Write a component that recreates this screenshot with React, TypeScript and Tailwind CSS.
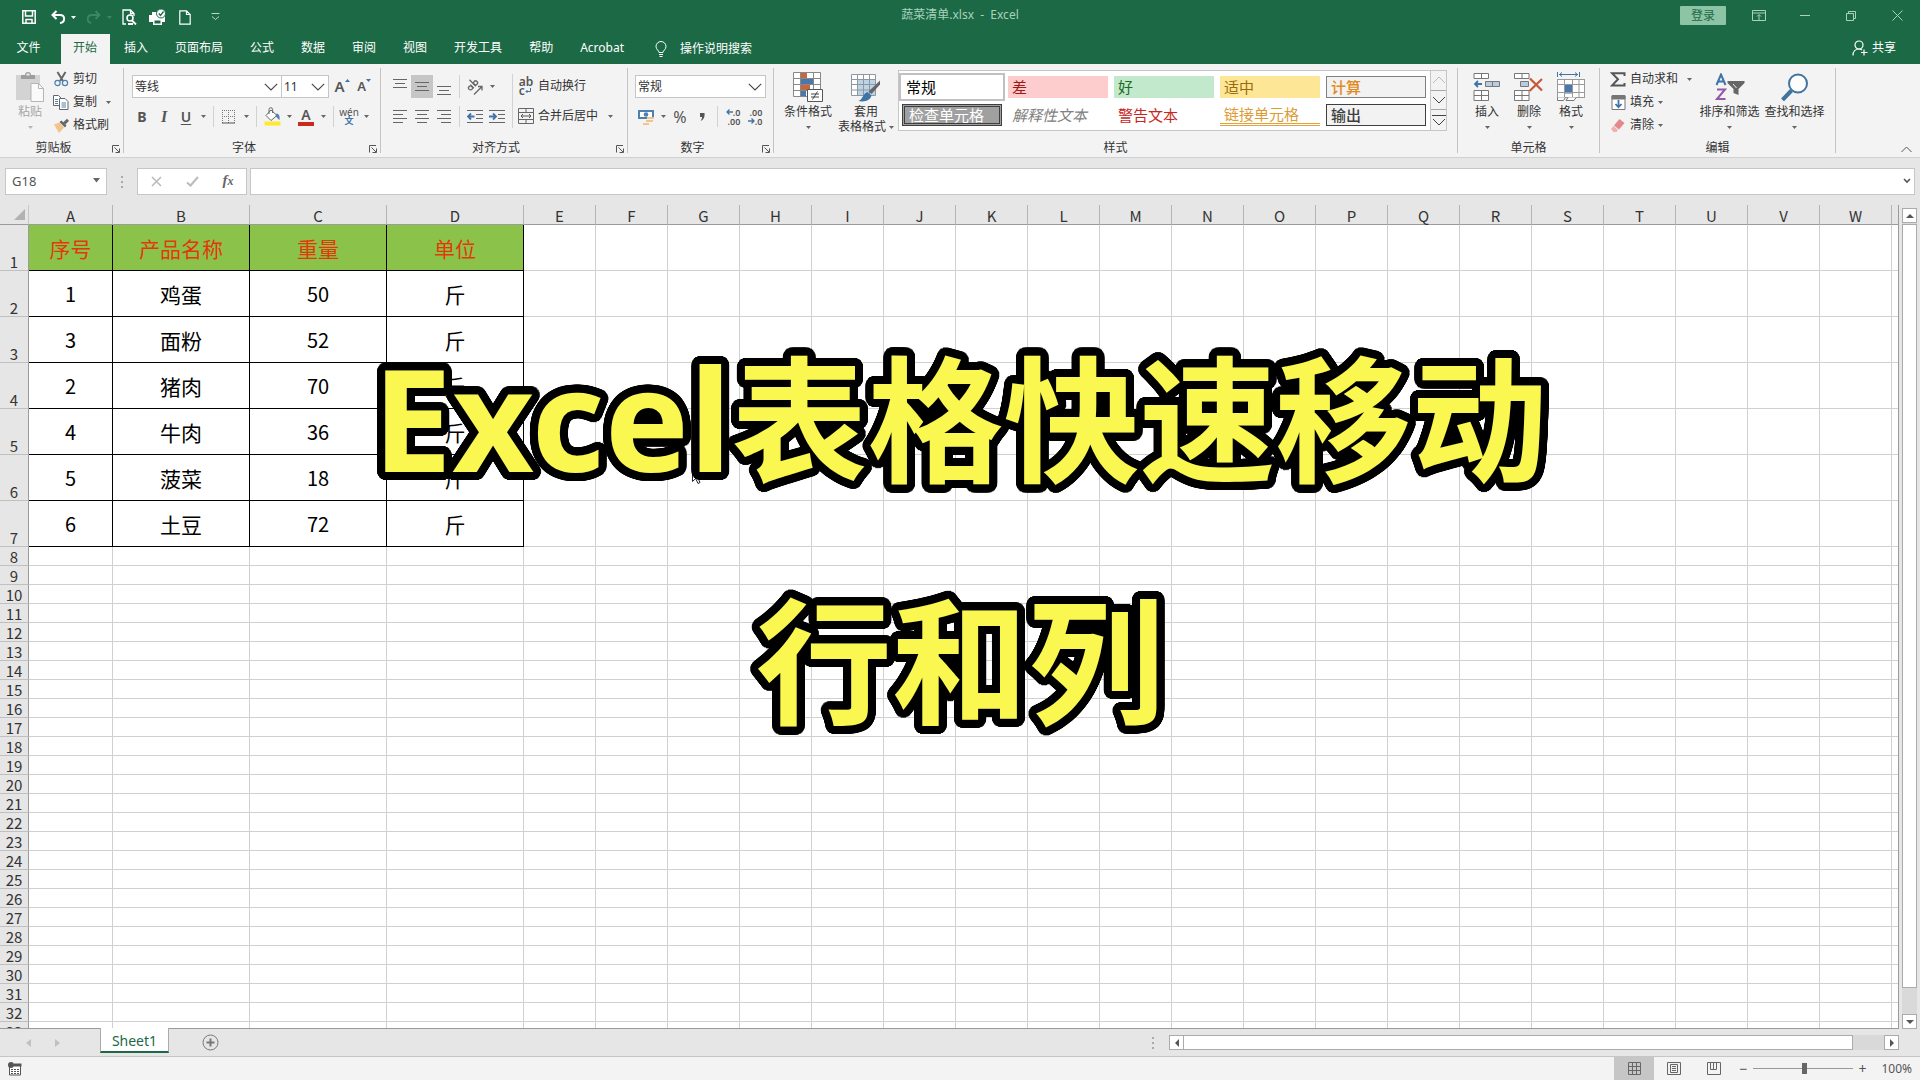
import type { ReactNode } from "react";

/* ---------- small shared pieces ---------- */

function Arrow({ className = "text-[#666]" }: { className?: string }) {
  return (
    <svg width="5" height="3" viewBox="0 0 5 3" className={className} aria-hidden="true">
      <path d="M0 0h5L2.500 3z" fill="currentColor" />
    </svg>
  );
}

function ArrowButton({ label, className = "" }: { label: string; className?: string }) {
  return (
    <button aria-label={label} className={`flex h-full w-3 shrink-0 items-center justify-center ${className}`}>
      <Arrow />
    </button>
  );
}

function IconButton({ label, active = false, children }: { label: string; active?: boolean; children: ReactNode }) {
  return (
    <button
      aria-label={label}
      className={`flex h-full w-[22px] shrink-0 items-center justify-center text-[#555] ${active ? "bg-[#c6c6c6]" : ""}`}
    >
      {children}
    </button>
  );
}

function Sep() {
  return <span className="mx-1 h-full w-px shrink-0 bg-[#d2d2d2]" />;
}

function Launcher({ label }: { label: string }) {
  return (
    <button aria-label={label} className="absolute right-[3px] bottom-0">
      <svg width="8" height="8" viewBox="0 0 8 8" fill="none" stroke="#555">
        <path d="M.5 7.500V.5H7M2.500 2.500l4.500 4.500M7.500 3.500v4H3.500" />
      </svg>
    </button>
  );
}

function Group({
  title,
  width,
  launcher = false,
  children,
}: {
  title: string;
  width: string;
  launcher?: boolean;
  children: ReactNode;
}) {
  return (
    <section aria-label={title} className={`relative flex shrink-0 flex-col border-r border-[#c4c4c4] ${width}`}>
      <div className="flex h-[75px]">{children}</div>
      <div className={`flex h-[10px] items-center justify-center leading-[16px] text-[#333] ${launcher ? "pr-4" : ""}`}>{title}</div>
      {launcher && <Launcher label={`${title}设置`} />}
    </section>
  );
}

function BigButton({
  lines,
  width,
  disabled = false,
  children,
}: {
  lines: string[];
  width: string;
  disabled?: boolean;
  children: ReactNode;
}) {
  return (
    <button disabled={disabled} className={`flex shrink-0 flex-col items-center pt-1 ${width} ${disabled ? "text-[#a6a6a6]" : ""}`}>
      <span className="flex h-[30px] items-center">{children}</span>
      <span className="mt-0.5 h-4 leading-4 whitespace-nowrap">{lines[0]}</span>
      <span className="flex h-[14px] items-center gap-[3px] leading-4 whitespace-nowrap">
        {lines[1]}
        <Arrow className={disabled ? "text-[#b5b5b5]" : "text-[#666]"} />
      </span>
    </button>
  );
}

function SmallButton({ icon, text, arrow = "" }: { icon: ReactNode; text: string; arrow?: string }) {
  return (
    <button className="flex h-[22px] items-center whitespace-nowrap">
      <span className="mr-[3px] flex w-[18px] justify-center">{icon}</span>
      {text}
      {arrow && (
        <span className={arrow}>
          <Arrow />
        </span>
      )}
    </button>
  );
}

function Combo({ label, value, options, width }: { label: string; value: string; options: string[]; width: string }) {
  return (
    <span className={`relative flex h-full ${width}`}>
      <select
        aria-label={label}
        defaultValue={value}
        className="h-full w-full appearance-none border border-[#c6c6c6] bg-white pl-[2px] text-[12px] text-[#333] outline-none"
      >
        {options.map((o) => (
          <option key={o}>{o}</option>
        ))}
      </select>
      <svg
        className="pointer-events-none absolute top-[8px] right-1"
        width="14"
        height="8"
        viewBox="0 0 14 8"
        fill="none"
        stroke="#444"
        strokeWidth="1.100"
      >
        <path d="M.8.8L7 7L13.200.8" />
      </svg>
    </span>
  );
}

/* Horizontal-rule icons; each entry is [x, width]. */
function Lines({ rows, y = 1 }: { rows: number[][]; y?: number }) {
  return (
    <svg width="16" height="16" viewBox="0 0 16 16" stroke="#666" strokeWidth="1">
      {rows.map(([x, w], i) => (
        <path key={i} d={`M${x} ${y + i * 4 + 0.5}h${w}`} />
      ))}
    </svg>
  );
}

/* ---------- ribbon icons ---------- */

const ScissorsIcon = (
  <svg width="15" height="16" viewBox="0 0 15 16" fill="none">
    <path d="M3.500 1l5.500 9M11.500 1L6 10" stroke="#666" strokeWidth="2" />
    <circle cx="3.500" cy="12" r="2.600" stroke="#4f81b0" strokeWidth="1.200" />
    <circle cx="11" cy="12" r="2.600" stroke="#4f81b0" strokeWidth="1.200" />
  </svg>
);

const CopyIcon = (
  <svg width="16" height="15" viewBox="0 0 16 15" fill="#fff" stroke="#666">
    <path d="M.5.5h5l3 3v7h-8z" />
    <path d="M2 4.500h3M2 6.500h3M2 8.500h3" stroke="#4f81b0" />
    <path d="M6.500 3.500h5.500l3 3v8h-8.500z" />
    <path d="M8.500 8h4.500M8.500 10h4.500M8.500 12h4.500" stroke="#4f81b0" />
  </svg>
);

const PainterIcon = (
  <svg width="17" height="15" viewBox="0 0 17 15">
    <path d="M1 6.500l5.500-2L11 9.500l-5 5.500z" fill="#f0c48c" />
    <path d="M6.500 4l2-1.500 5 5L12 9.500z" fill="#666" />
    <path d="M10 4.500L14 .8 16 2.800 12.500 6.500z" fill="#666" />
  </svg>
);

const PasteIcon = (
  <svg width="28" height="30" viewBox="0 0 28 30">
    <path d="M0 3h24v25H0z" fill="#d3d3d3" />
    <path d="M5 3h4a3 3 0 0 1 6 0h4v4H5z" fill="#9d9d9d" />
    <path d="M10.500 3.500h3v-2h-3z" fill="#eee" />
    <path d="M15 11.500h7.500l5 5V29.500H15z" fill="#fafafa" stroke="#b5b5b5" />
    <path d="M22.500 11.500v5h5" fill="none" stroke="#b5b5b5" />
  </svg>
);

const BordersIcon = (
  <svg width="14" height="14" viewBox="0 0 14 14" fill="none" stroke="#777">
    <path d="M.5 0v13M6.500 0v13M12.500 0v13M0 .5h13M0 6.500h13" strokeDasharray="1 1" />
    <path d="M0 13h13" stroke="#555" />
  </svg>
);

const FillIcon = (
  <svg width="17" height="19" viewBox="0 0 17 19">
    <path d="M7 3l6 5.500-6 5-5-5z" fill="#fff" stroke="#666" />
    <path d="M5 7V2.500a1.800 1.800 0 0 1 3.600 0V6" fill="none" stroke="#666" />
    <path d="M12.500 6.500c3 .5 3.500 3.500 3 6.500-1.500-1-2.500-2.500-4-4z" fill="#4f81b0" />
    <path d="M.5 14.500h16V18.500H.5z" fill="#ffe92e" />
  </svg>
);

const MergeIcon = (
  <svg width="16" height="16" viewBox="0 0 16 16" fill="none" stroke="#666">
    <path d="M.5.5h15v15H.5zM.5 4.500h15M.5 11.500h15M8 .5v4M8 11.500v4" />
    <path d="M3 8h10M5 6L3 8l2 2M11 6l2 2-2 2" stroke="#555" />
  </svg>
);

const MoneyIcon = (
  <svg width="17" height="16" viewBox="0 0 17 16">
    <path d="M1 2h14v7H1z" fill="#fff" stroke="#4f81b0" strokeWidth="2" />
    <circle cx="8" cy="5.500" r="2.300" fill="#4f81b0" />
    <path d="M9 8h7v2H9zM8 11h7v2H8zM5 14h6v2H5z" fill="#f0c48c" />
  </svg>
);

const OrientationIcon = (
  <svg width="18" height="18" viewBox="0 0 18 18" fill="none" stroke="#666" strokeWidth="1.300">
    <path d="M8 16.500L16 8.500M16 12.500v-4h-4" />
    <g transform="translate(5 13) rotate(-45)">
      <circle cx="1.800" cy="-2.500" r="2" />
      <path d="M4 -5v5M6.800 -9v9" />
      <circle cx="9" cy="-2.500" r="2" />
    </g>
  </svg>
);

function DecimalIcon({ increase }: { increase: boolean }) {
  return (
    <span className="flex flex-col text-[9px] leading-[9px] font-semibold text-[#555]">
      <span className={increase ? "flex items-center justify-end" : "text-right"}>
        {increase && <Direction left />}
        {increase ? ".0" : ".00"}
      </span>
      <span className={increase ? "text-right" : "flex items-center justify-end"}>
        {!increase && <Direction />}
        {increase ? ".00" : ".0"}
      </span>
    </span>
  );
}

function Direction({ left = false }: { left?: boolean }) {
  return (
    <svg width="7" height="6" viewBox="0 0 7 6" fill="none" stroke="#3f74a8" strokeWidth="1.300">
      <path d={left ? "M7 3H1M3.500.5L1 3l2.500 2.500" : "M0 3h6M3.500.5L6 3 3.500 5.500"} />
    </svg>
  );
}

function IndentIcon({ left }: { left: boolean }) {
  return (
    <svg width="17" height="14" viewBox="0 0 17 14" fill="none" stroke="#666">
      <path d="M0 .5h16M9 4.500h7M9 8.500h7M0 12.500h16" />
      <path d={left ? "M7.500 6.500H1M4 3.500l-3 3 3 3" : "M0 6.500h6.500M4 3.500l3 3-3 3"} stroke="#3f74a8" strokeWidth="1.800" />
    </svg>
  );
}

const ConditionalIcon = (
  <svg width="30" height="30" viewBox="0 0 30 30">
    <path d="M.5.5h27v24H.5z" fill="#fff" />
    <path d="M8 1h6v6H8zM8 13h9v5H8z" fill="#c8673e" />
    <path d="M8 7h12v5H8zM8 19h5v5H8z" fill="#4a78ad" />
    <path d="M.5.5h27v24H.5zM.5 6.500h27M.5 12.500h27M.5 18.500h27M7.500.5v24M20.500.5v24" fill="none" stroke="#888" />
    <path d="M14.500 17.500h15v12h-15z" fill="#fff" stroke="#555" />
    <path d="M18 22h8M18 25h8M24.500 19.500l-5 8" stroke="#444" />
  </svg>
);

const TableFormatIcon = (
  <svg width="30" height="30" viewBox="0 0 30 30">
    <path d="M.5 2.500h24v21H.5z" fill="#fff" />
    <path d="M6 7.500h18.500v16H6z" fill="#bcd3e6" />
    <path d="M.5 2.500h24v21H.5zM.5 7.500h24M.5 12.500h24M.5 18h24M6.500 2.500v21M12.500 2.500v21M18.500 2.500v21" fill="none" stroke="#8d98a3" />
    <path d="M29 8.500v4L20.500 22l-3-2.500z" fill="#666" />
    <path d="M16.500 20l4 3.500c-1 4.500-6 7-13.500 5.500 5-1 4.500-7.500 9.500-9z" fill="#3f74a8" />
  </svg>
);

const InsertIcon = (
  <svg width="28" height="28" viewBox="0 0 28 28" fill="#fff" stroke="#777">
    <path d="M1 .5h14.500v5H1zM8.500.5v5M1 17.500h14.500v10H1zM1 22.500h14.500M8.500 17.500v10" />
    <path d="M12.500 8.500h14v5h-14zM19.500 8.500v5" fill="#b9cde0" />
    <path d="M9 11H2M5 8l-3 3 3 3" fill="none" stroke="#3f74a8" strokeWidth="1.800" />
  </svg>
);

const DeleteIcon = (
  <svg width="30" height="28" viewBox="0 0 30 28" fill="#fff" stroke="#777">
    <path d="M.5.5H15v5H.5zM8 .5v5M.5 17.500H15v10H.5zM.5 22.500H15M8 17.500v10" />
    <path d="M6.500 8.500h8v5h-8z" fill="#b9cde0" />
    <path d="M16 5.500l12 12M28 6L15.500 18" fill="none" stroke="#c8573a" strokeWidth="2.200" />
  </svg>
);

const FormatIcon = (
  <svg width="28" height="30" viewBox="0 0 28 30" fill="none" stroke="#777">
    <path d="M.5 0v5M22.500 0v5M2 2.500h19M5 .5l-2.500 2L5 4.500M18 .5l2.500 2-2.500 2" stroke="#3f74a8" />
    <path d="M.5 7.500h27v18H.5z" fill="#fff" />
    <path d="M7.500 12.500h8v9h-8z" fill="#4a78ad" stroke="none" />
    <path d="M.5 7.500h27v18H.5zM.5 12.500h27M.5 20.500h27M7.500 7.500v18M15.500 7.500v18M22 7.500v18" stroke="#999" />
    <path d="M.5 25.500v3h6l2-3M11 25.500l-2 3h8l2-3" fill="#fff" />
  </svg>
);

const SortIcon = (
  <svg width="30" height="28" viewBox="0 0 30 28" fill="none">
    <path d="M1.500 12L6 1.500 10.500 12M3 8.500h6" stroke="#3f74a8" strokeWidth="2" />
    <path d="M2 16.500h8L2 26h8.500" stroke="#9359a8" strokeWidth="2" />
    <path d="M12.500 8h17v2l-6 6v6l-5-2v-4l-6-6z" fill="#666" />
    <path d="M18 11l3.500 4" stroke="#eee" />
  </svg>
);

const FindIcon = (
  <svg width="28" height="28" viewBox="0 0 28 28" fill="none" stroke="#41739f">
    <circle cx="17" cy="10.500" r="9" strokeWidth="2" fill="#fdfdfd" />
    <path d="M10.500 17.500L1.500 27" strokeWidth="4" />
  </svg>
);

const SigmaIcon = (
  <svg width="16" height="15" viewBox="0 0 16 15" fill="none" stroke="#555" strokeWidth="2">
    <path d="M14.500 4V1.200H2L8 7.300 2 13.500h12.500V11" />
  </svg>
);

const FillDownIcon = (
  <svg width="15" height="15" viewBox="0 0 15 15" fill="#fff" stroke="#777">
    <path d="M1 .5h13v14H1z" />
    <path d="M1 1h13v3H1z" fill="#777" />
    <path d="M7.500 5v7M4.500 9l3 3.200 3-3.200" fill="none" stroke="#3f74a8" strokeWidth="1.800" />
  </svg>
);

const EraserIcon = (
  <svg width="14" height="13" viewBox="0 0 14 13">
    <path d="M8.500 0L13.500 4 8 10.500 3 6.500z" fill="#e5888a" />
    <path d="M2.500 7l4.500 4-1.500 2h-3L0 10z" fill="#efb0b0" />
  </svg>
);

/* ---------- title bar and tabs ---------- */

function TitleBar() {
  const winBtn = "flex h-full w-[46px] items-center justify-center";
  return (
    <header className="grid h-[34px] grid-cols-[1fr_auto_1fr] items-center text-white">
      <div className="flex h-full items-center pl-[15px]">
        <button aria-label="保存" className="flex w-7 justify-center">
          <svg width="14" height="14" viewBox="0 0 14 14" fill="none" stroke="#fff" strokeWidth="1.500">
            <path d="M.8.8h12.400v12.400H.8zM3.500 1v5h7V1M4 13V9.500h6V13" />
          </svg>
        </button>
        <button aria-label="撤消" className="flex w-[26px] justify-center pl-1">
          <svg width="15" height="14" viewBox="0 0 15 14" fill="none" stroke="#fff" strokeWidth="2">
            <path d="M5.500 1L1.500 5l4 4M2 5h7c5.500 0 5.500 7.500 0 8" />
          </svg>
        </button>
        <button aria-label="撤消列表" className="flex w-2 justify-center">
          <Arrow className="text-white" />
        </button>
        <button aria-label="恢复" className="flex w-7 justify-center pl-1">
          <svg width="15" height="14" viewBox="0 0 15 14" fill="none" stroke="#408565" strokeWidth="1.800">
            <path d="M9.500 1l4 4-4 4M13 5H6C.5 5 .5 12 5 13" />
          </svg>
        </button>
        <button aria-label="恢复列表" className="mr-0.5 flex w-2 justify-center">
          <Arrow className="text-[#408565]" />
        </button>
        <button aria-label="打印预览" className="flex w-7 justify-center">
          <svg width="15" height="16" viewBox="0 0 15 16" fill="none" stroke="#fff" strokeWidth="1.300">
            <path d="M4 15H1V1h7.500l3.500 3.500V7M8.500 1v3.500H12" />
            <circle cx="8" cy="9" r="3" strokeWidth="1.600" />
            <path d="M10 11.500l4 4M6 15h5" strokeWidth="1.800" />
          </svg>
        </button>
        <button aria-label="快速打印" className="flex w-7 justify-center">
          <svg width="17" height="16" viewBox="0 0 17 16">
            <path d="M0 6h3V3h5v4h8v6h-3v3H4v-3H0z" fill="#fff" />
            <path d="M5.500 11.500h6v3h-6z" fill="#1c6946" />
            <circle cx="12" cy="4.500" r="4.500" fill="#fff" stroke="#1c6946" />
            <path d="M9.800 4.500l1.700 2 3-4" fill="none" stroke="#1c6946" strokeWidth="1.300" />
          </svg>
        </button>
        <button aria-label="新建" className="flex w-7 justify-center">
          <svg width="12" height="15" viewBox="0 0 12 15" fill="none" stroke="#fff" strokeWidth="1.200">
            <path d="M.8.8h6.700l3.700 3.700v9.700H.8zM7.500.8v3.700h3.700" />
          </svg>
        </button>
        <button aria-label="自定义快速访问工具栏" className="flex w-8 justify-center">
          <svg width="9" height="8" viewBox="0 0 9 8" fill="none" stroke="#b9d8c8">
            <path d="M.5.5h8M1 3.500l3.500 3 3.500-3" />
          </svg>
        </button>
      </div>
      <h1 className="pb-1 whitespace-pre text-[#a8d2bc]">蔬菜清单.xlsx  -  Excel</h1>
      <div className="flex h-[31px] items-center justify-end self-start text-[#a8d2bc]">
        <button className="mr-2.5 h-[19px] w-[46px] rounded-[1px] bg-[#8cc4a5] leading-[18px] text-[#1c6946]">登录</button>
        <button aria-label="功能区显示选项" className={winBtn}>
          <svg width="14" height="11" viewBox="0 0 14 11" fill="none" stroke="currentColor">
            <path d="M.5.5h13v10H.5zM.5 3h13M7 10V5M5 6.500l2-2 2 2" />
          </svg>
        </button>
        <button aria-label="最小化" className={winBtn}>
          <svg width="10" height="1" viewBox="0 0 10 1">
            <path d="M0 .5h10" stroke="currentColor" />
          </svg>
        </button>
        <button aria-label="还原" className={winBtn}>
          <svg width="10" height="10" viewBox="0 0 10 10" fill="none" stroke="currentColor">
            <path d="M.5 2.500h7v7h-7zM2.500 2.500v-2h7v7h-2" />
          </svg>
        </button>
        <button aria-label="关闭" className={winBtn}>
          <svg width="11" height="11" viewBox="0 0 11 11" fill="none" stroke="currentColor">
            <path d="M.5.5l10 10M10.500.5l-10 10" />
          </svg>
        </button>
      </div>
    </header>
  );
}

const TABS = ["开始", "插入", "页面布局", "公式", "数据", "审阅", "视图", "开发工具", "帮助", "Acrobat"];

function Tabs() {
  return (
    <nav className="flex h-[30px] items-stretch text-white">
      <button className="w-[61px] pr-1 pb-0.5">文件</button>
      <div className="flex gap-px">
        {TABS.map((t, i) => (
          <button key={t} className={`px-[13px] pb-0.5 whitespace-nowrap ${i === 0 ? "bg-[#f3f3f3] pl-3 text-[#1c6946]" : ""}`}>
            {t}
          </button>
        ))}
      </div>
      <button className="flex items-center gap-[13px] pl-[18px]">
        <svg width="12" height="16" viewBox="0 0 12 16" fill="none" stroke="#fff">
          <path d="M4 11.500c0-2-3-3-3-6a5 5 0 0 1 10 0c0 3-3 4-3 6zM4 13.500h4M4.500 15.500h3" />
        </svg>
        操作说明搜索
      </button>
      <button className="ml-auto flex items-center gap-1 pr-6 pb-0.5">
        <svg width="16" height="16" viewBox="0 0 16 16" fill="none" stroke="#fff" strokeWidth="1.200">
          <circle cx="7" cy="5" r="4" />
          <path d="M1 15.500c0-4 2.500-6.500 6-6.500 1 0 2 .3 3 1M12 9.500v6M9 12.500h6.500" />
        </svg>
        共享
      </button>
    </nav>
  );
}

/* ---------- ribbon ---------- */

const STYLES: [string, string][] = [
  ["常规", "bg-white text-black outline-2 outline-offset-1 outline-[#c3c0c3]"],
  ["差", "bg-[#fdcccc] text-[#a01818]"],
  ["好", "bg-[#c3e9cd] text-[#1c6b20]"],
  ["适中", "bg-[#fde695] text-[#9a6a0c]"],
  ["计算", "border border-[#7f7f7f] bg-[#f2f2f2] font-medium text-[#e38a1c]"],
  ["检查单元格", "border-3 border-double border-[#3f3f3f] bg-[#a0a0a0] text-white"],
  ["解释性文本", "text-[#808080] italic"],
  ["警告文本", "text-[#c8261c]"],
  ["链接单元格", "border-b-3 border-double border-[#e2a33a] text-[#dc9b33]"],
  ["输出", "border border-[#3f3f3f] bg-[#f2f2f2] font-medium text-[#3f3f3f]"],
];

function Chevron({ up = false, color = "#444" }: { up?: boolean; color?: string }) {
  return (
    <svg width="14" height="8" viewBox="0 0 14 8" fill="none" stroke={color}>
      <path d={up ? "M1 7l6-6 6 6" : "M1 1l6 6 6-6"} />
    </svg>
  );
}

function Ribbon() {
  const row = "flex h-[23px] items-stretch";
  return (
    <div className="flex border-b border-[#d0d0d0] bg-[#f3f3f3] pt-1 pb-1 text-[#333]">
      <Group title="剪贴板" width="w-[124px]" launcher>
        <BigButton lines={["粘贴", ""]} width="ml-2 w-[44px]" disabled>
          {PasteIcon}
        </BigButton>
        <div className="flex flex-col gap-px">
          <SmallButton icon={ScissorsIcon} text="剪切" />
          <SmallButton icon={CopyIcon} text="复制" arrow="ml-[9px]" />
          <SmallButton icon={PainterIcon} text="格式刷" />
        </div>
      </Group>

      <Group title="字体" width="w-[257px]" launcher>
        <div className="flex flex-col gap-2 pt-[7px] pl-[7px]">
          <div className={`${row} pl-px`}>
            <Combo label="字体" value="等线" options={["等线", "宋体"]} width="w-[150px]" />
            <Combo label="字号" value="11" options={["11", "12", "14"]} width="-ml-px w-[48px]" />
            <button aria-label="增大字号" className="ml-0.5 flex w-[22px] items-center justify-center text-[15px] font-semibold text-[#555]">
              A
              <svg width="5" height="3" viewBox="0 0 5 3" className="mb-3">
                <path d="M0 3h5L2.500 0z" fill="#3f74a8" />
              </svg>
            </button>
            <button aria-label="减小字号" className="flex w-[22px] items-center justify-center text-[13px] font-semibold text-[#555]">
              A<Arrow className="mb-3 text-[#3f74a8]" />
            </button>
          </div>
          <div className="flex h-[21px]">
            <IconButton label="加粗"><b className="text-[14px]">B</b></IconButton>
            <IconButton label="倾斜"><i className="font-['Liberation_Serif',serif] text-[16px] font-bold">I</i></IconButton>
            <IconButton label="下划线"><u className="text-[14px] font-semibold underline-offset-2">U</u></IconButton>
            <ArrowButton label="下划线样式" />
            <Sep />
            <IconButton label="边框">{BordersIcon}</IconButton>
            <ArrowButton label="边框样式" />
            <Sep />
            <IconButton label="填充颜色">{FillIcon}</IconButton>
            <ArrowButton label="选择填充颜色" />
            <IconButton label="字体颜色">
              <span className="w-4 border-b-4 border-[#c92a1c] text-[14px] leading-[14px] font-semibold">A</span>
            </IconButton>
            <ArrowButton label="选择字体颜色" />
            <Sep />
            <IconButton label="拼音">
              <span className="flex flex-col items-center text-[10px] leading-[8px]">
                wén<span className="text-[9px] leading-[10px] font-bold text-[#3f74a8]">文</span>
              </span>
            </IconButton>
            <ArrowButton label="拼音选项" />
          </div>
        </div>
      </Group>

      <Group title="对齐方式" width="w-[247px]" launcher>
        <div className="flex flex-col gap-2 pt-[7px] pl-2">
          <div className={row}>
            <IconButton label="顶端对齐"><Lines rows={[[1, 14], [3, 10], [1, 14]]} y={0} /></IconButton>
            <IconButton label="垂直居中" active><Lines rows={[[1, 14], [3, 10], [1, 14]]} y={3} /></IconButton>
            <IconButton label="底端对齐"><Lines rows={[[1, 14], [3, 10], [1, 14]]} y={7} /></IconButton>
            <Sep />
            <IconButton label="方向">{OrientationIcon}</IconButton>
            <ArrowButton label="方向选项" />
          </div>
          <div className="flex h-[21px]">
            <IconButton label="左对齐"><Lines rows={[[1, 14], [1, 10], [1, 14], [1, 10]]} /></IconButton>
            <IconButton label="居中"><Lines rows={[[1, 14], [3, 10], [1, 14], [3, 10]]} /></IconButton>
            <IconButton label="右对齐"><Lines rows={[[1, 14], [5, 10], [1, 14], [5, 10]]} /></IconButton>
            <Sep />
            <IconButton label="减少缩进量"><IndentIcon left /></IconButton>
            <IconButton label="增加缩进量"><IndentIcon left={false} /></IconButton>
          </div>
        </div>
        <span className="mx-1 mt-1.5 h-[54px] w-px bg-[#d2d2d2]" />
        <div className="flex flex-col gap-2 pt-[7px]">
          <SmallButton
            icon={
              <span className="flex flex-col text-left text-[12px] leading-[9px] font-semibold text-[#555]">
                ab
                <span className="flex items-center">
                  c
                  <svg width="6" height="6" viewBox="0 0 6 6" fill="none" stroke="#3f74a8">
                    <path d="M5.500 0v3.500H1M2.500 2L1 3.500 2.500 5" />
                  </svg>
                </span>
              </span>
            }
            text="自动换行"
          />
          <SmallButton icon={MergeIcon} text="合并后居中" arrow="ml-[10px]" />
        </div>
      </Group>

      <Group title="数字" width="w-[146px]" launcher>
        <div className="flex flex-col gap-2 pt-[7px] pl-[7px]">
          <div className={row}>
            <Combo label="数字格式" value="常规" options={["常规", "数字", "货币"]} width="w-[131px]" />
          </div>
          <div className="flex h-[21px]">
            <IconButton label="会计数字格式">{MoneyIcon}</IconButton>
            <ArrowButton label="会计数字格式选项" />
            <IconButton label="百分比样式"><span className="text-[16px]">%</span></IconButton>
            <IconButton label="千位分隔样式">
              <svg width="5" height="8" viewBox="0 0 5 8"><path d="M0 0h4.500c.5 4-1 7-4 8 1-1.500 1.500-2.500 1.500-4H0z" fill="#555" /></svg>
            </IconButton>
            <Sep />
            <IconButton label="增加小数位数"><DecimalIcon increase /></IconButton>
            <IconButton label="减少小数位数"><DecimalIcon increase={false} /></IconButton>
          </div>
        </div>
      </Group>

      <Group title="样式" width="w-[684px]">
        <BigButton lines={["条件格式", ""]} width="ml-2 w-[52px]">{ConditionalIcon}</BigButton>
        <BigButton lines={["套用", "表格格式"]} width="ml-0.5 w-[60px]">{TableFormatIcon}</BigButton>
        <div className="mt-0.5 ml-0.5 flex h-[61px] border border-[#c6c6c6] bg-white">
          <div className="grid grid-cols-[repeat(5,100px)] grid-rows-[22px_22px] gap-1.5 pt-[5px] pr-1 pl-[3px]">
            {STYLES.map(([name, look]) => (
              <button key={name} className={`flex items-center overflow-hidden pl-1 text-[15px] leading-[16px] whitespace-nowrap ${look}`}>
                {name}
              </button>
            ))}
          </div>
          <div className="grid w-[16px] grid-rows-3 divide-y divide-[#a8a8a8] border-l border-[#c6c6c6] bg-[#f3f3f3]">
            <button aria-label="上一行" className="flex items-center justify-center"><Chevron up color="#bbb" /></button>
            <button aria-label="下一行" className="flex items-center justify-center"><Chevron /></button>
            <button aria-label="其他样式" className="flex flex-col items-center justify-center gap-0.5">
              <span className="h-px w-[14px] bg-[#444]" />
              <Chevron />
            </button>
          </div>
        </div>
      </Group>

      <Group title="单元格" width="w-[142px]">
        <BigButton lines={["插入", ""]} width="ml-2 w-[42px]">{InsertIcon}</BigButton>
        <BigButton lines={["删除", ""]} width="w-[42px]">{DeleteIcon}</BigButton>
        <BigButton lines={["格式", ""]} width="w-[42px]">{FormatIcon}</BigButton>
      </Group>

      <Group title="编辑" width="w-[236px]">
        <div className="ml-[9px] flex w-[88px] flex-col gap-px">
          <SmallButton icon={SigmaIcon} text="自动求和" arrow="ml-[9px]" />
          <SmallButton icon={FillDownIcon} text="填充" arrow="ml-1" />
          <SmallButton icon={EraserIcon} text="清除" arrow="ml-1" />
        </div>
        <BigButton lines={["排序和筛选", ""]} width="w-[65px]">{SortIcon}</BigButton>
        <BigButton lines={["查找和选择", ""]} width="w-[65px]">{FindIcon}</BigButton>
      </Group>

      <button aria-label="折叠功能区" className="mr-2 ml-auto self-end">
        <svg width="11" height="7" viewBox="0 0 11 7" fill="none" stroke="#555">
          <path d="M.5 6l5-5 5 5" />
        </svg>
      </button>
    </div>
  );
}

/* ---------- formula bar ---------- */

function FormulaBar() {
  return (
    <div className="flex h-[27px] items-stretch px-[5px]">
      <div className="relative flex w-[102px]">
        <input aria-label="名称框" defaultValue="G18" className="w-full border border-[#c6c6c6] bg-white pl-1.5 text-[13px] text-[#555] outline-none" />
        <button aria-label="名称列表" className="absolute top-2.5 right-[7px]">
          <svg width="7" height="5" viewBox="0 0 7 5"><path d="M0 0h7L3.500 4.500z" fill="#666" /></svg>
        </button>
      </div>
      <span className="mx-3.5 flex w-[2px] flex-col justify-center gap-[3px]">
        <i className="h-[2px] bg-[#aaa]" />
        <i className="h-[2px] bg-[#aaa]" />
        <i className="h-[2px] bg-[#aaa]" />
      </span>
      <div className="flex w-[110px] items-center border border-[#c6c6c6] bg-white">
        <button aria-label="取消" className="flex w-9 justify-center">
          <svg width="11" height="11" viewBox="0 0 11 11" stroke="#bbb" strokeWidth="1.600"><path d="M1 1l9 9M10 1l-9 9" /></svg>
        </button>
        <button aria-label="输入" className="flex w-9 justify-center">
          <svg width="13" height="11" viewBox="0 0 13 11" fill="none" stroke="#bbb" strokeWidth="2"><path d="M1 6.500l3.500 3L12 1" /></svg>
        </button>
        <button aria-label="插入函数" className="w-9 pb-0.5 font-['Liberation_Serif',serif] text-[15px] leading-5 font-bold text-[#666] italic">
          f<span className="text-[12px]">x</span>
        </button>
      </div>
      <div className="relative ml-[3px] flex flex-1">
        <input aria-label="编辑栏" className="w-full border border-[#c6c6c6] bg-white px-2 outline-none" />
        <button aria-label="展开编辑栏" className="absolute top-2.5 right-1">
          <svg width="8" height="6" viewBox="0 0 8 6" fill="none" stroke="#555" strokeWidth="1.600"><path d="M1 1l3 3 3-3" /></svg>
        </button>
      </div>
    </div>
  );
}

/* ---------- sheet ---------- */

const COLUMNS = "ABCDEFGHIJKLMNOPQRSTUVW".split("");
const DATA = [
  ["序号", "产品名称", "重量", "单位"],
  ["1", "鸡蛋", "50", "斤"],
  ["3", "面粉", "52", "斤"],
  ["2", "猪肉", "70", "斤"],
  ["4", "牛肉", "36", "斤"],
  ["5", "菠菜", "18", "斤"],
  ["6", "土豆", "72", "斤"],
];
const ROWS = Array.from({ length: 33 }, (_, i) => i + 1);

function Sheet() {
  return (
    <table className="w-full table-fixed border-separate border-spacing-0 bg-white font-['Noto_Sans_CJK_SC',sans-serif]">
      <colgroup>
        <col className="w-[29px]" />
        {COLUMNS.map((c, i) => (
          <col key={c} className={i === 0 ? "w-[84px]" : i < 4 ? "w-[137px]" : "w-[72px]"} />
        ))}
        <col />
      </colgroup>
      <thead className="bg-[#e6e6e6] text-[15px] text-[#333]">
        <tr className="h-[20px]">
          <th aria-label="全选" className="border-r border-b border-r-[#c8c8c8] border-b-[#9b9b9b] p-0">
            <svg width="11" height="11" viewBox="0 0 11 11" className="mr-[3px] ml-auto"><path d="M11 0v11H0z" fill="#b2b2b2" /></svg>
          </th>
          {COLUMNS.map((c) => (
            <th key={c} scope="col" className="border-r border-b border-r-[#b4b4b4] border-b-[#9b9b9b] p-0 pt-0.5 leading-[17px] font-normal">
              {c}
            </th>
          ))}
          <th className="border-b border-b-[#9b9b9b] p-0" />
        </tr>
      </thead>
      <tbody>
        {ROWS.map((r) => {
          const filled = r <= DATA.length;
          return (
            <tr key={r} className={filled ? "h-[46px]" : "h-[19px]"}>
              <th
                scope="row"
                className="border-r border-b border-r-[#9b9b9b] border-b-[#c0c0c0] bg-[#e6e6e6] p-0 align-bottom text-[15px] leading-[17px] font-normal text-[#333]"
              >
                {r}
              </th>
              {COLUMNS.map((c, i) => {
                if (filled && i < 4) {
                  return (
                    <td
                      key={c}
                      className={`border-r border-b border-black p-0 text-center leading-[28px] ${
                        r === 1 ? "bg-[#8bc34a] text-[21px] text-[#e2390a]" : i % 2 === 0 ? "text-[20px] text-black" : "text-[21px] text-black"
                      }`}
                    >
                      {DATA[r - 1][i]}
                    </td>
                  );
                }
                return <td key={c} className="border-r border-b border-[#d0d0d0] p-0" />;
              })}
              <td className="border-b border-[#d0d0d0] p-0" />
            </tr>
          );
        })}
      </tbody>
    </table>
  );
}

function Triangle({ d }: { d: string }) {
  return (
    <svg width="8" height="8" viewBox="0 0 8 8"><path d={d} fill="#555" /></svg>
  );
}

const SCROLL_BTN = "flex size-[15px] shrink-0 items-center justify-center border border-[#ababab] bg-white";

function SheetArea() {
  return (
    <div className="flex min-h-0 flex-1 pr-[3px]">
      <div className="min-w-0 flex-1 overflow-hidden border-r border-b border-[#9b9b9b]">
        <Sheet />
      </div>
      <div className="ml-[3px] flex w-[15px] flex-col pt-[3px]">
        <button aria-label="向上滚动" className={SCROLL_BTN}><Triangle d="M0 6h8L4 2z" /></button>
        <div className="flex flex-1 flex-col bg-[#d9d9d9] pt-px pb-[26px]">
          <div className="flex-1 border border-[#ababab] bg-white" />
        </div>
        <button aria-label="向下滚动" className={SCROLL_BTN}><Triangle d="M0 2h8L4 6z" /></button>
      </div>
    </div>
  );
}

function SheetTabs() {
  return (
    <div className="flex h-[28px] items-stretch border-b border-[#c6c6c6]">
      <div className="flex w-[100px] items-center gap-6 pl-[26px]">
        <button aria-label="上一张工作表"><svg width="5" height="8" viewBox="0 0 5 8"><path d="M5 0v8L0 4z" fill="#c0c0c0" /></svg></button>
        <button aria-label="下一张工作表"><svg width="5" height="8" viewBox="0 0 5 8"><path d="M0 0v8l5-4z" fill="#c0c0c0" /></svg></button>
      </div>
      <button className="relative -mt-px mb-[3px] w-[69px] border-x border-b-2 border-x-[#ababab] border-b-[#1c6946] bg-white pt-0.5 text-[14px] leading-5 text-[#1c6946]">
        Sheet1
      </button>
      <button aria-label="新工作表" className="ml-[33px] self-center">
        <svg width="17" height="17" viewBox="0 0 17 17" fill="none" stroke="#777">
          <circle cx="8.500" cy="8.500" r="7.500" />
          <path d="M8.500 4.500v8M4.500 8.500h8" strokeWidth="2" />
        </svg>
      </button>
      <span className="ml-auto flex w-[2px] flex-col justify-center gap-[3px]">
        <i className="h-[2px] bg-[#aaa]" />
        <i className="h-[2px] bg-[#aaa]" />
        <i className="h-[2px] bg-[#aaa]" />
      </span>
      <div className="mr-[21px] ml-[15px] flex w-[38%] items-center">
        <button aria-label="向左滚动" className={SCROLL_BTN}><Triangle d="M6 0v8L2 4z" /></button>
        <div className="flex h-[15px] flex-1 bg-[#d9d9d9] pr-[31px]">
          <div className="flex-1 border border-l-0 border-[#ababab] bg-white" />
        </div>
        <button aria-label="向右滚动" className={SCROLL_BTN}><Triangle d="M2 0v8l4-4z" /></button>
      </div>
    </div>
  );
}

function StatusBar() {
  return (
    <footer className="flex h-[23px] items-center bg-[#f3f3f3] text-[#555]">
      <button aria-label="宏录制" className="ml-2">
        <svg width="14" height="14" viewBox="0 0 14 14">
          <path d="M1.500 3.500h11v9.500h-11z" fill="#fff" stroke="#555" />
          <path d="M6 1.500h7.500v3H6z" fill="#555" />
          <circle cx="3" cy="3" r="3" fill="#555" />
          <path d="M3 7.500h8M3 9.500h8M3 11.500h8" stroke="#555" strokeDasharray="2 1" />
        </svg>
      </button>
      <div className="ml-auto flex h-full">
        <button aria-label="普通" className="flex w-10 items-center justify-center bg-[#c6c6c6]">
          <svg width="13" height="13" viewBox="0 0 13 13" fill="none" stroke="#666"><path d="M.5.5h12v12H.5zM.5 4.500h12M.5 8.500h12M4.500.5v12M8.500.5v12" /></svg>
        </button>
        <button aria-label="页面布局" className="flex w-10 items-center justify-center">
          <svg width="14" height="13" viewBox="0 0 14 13" fill="none" stroke="#666"><path d="M.5.5h13v12H.5zM3.500 2.500h7v8h-7zM5 4.500h4M5 6.500h4M5 8.500h4" /></svg>
        </button>
        <button aria-label="分页预览" className="flex w-10 items-center justify-center">
          <svg width="14" height="13" viewBox="0 0 14 13" fill="none" stroke="#666"><path d="M.5.5h13v12H.5zM3.500 0v7.500h6V0M6.500 0v7" /></svg>
        </button>
      </div>
      <button aria-label="缩小" className="ml-[5px] w-[9px] text-[14px] leading-5">−</button>
      <input
        type="range"
        aria-label="显示比例"
        min={10}
        max={190}
        defaultValue={102}
        className="mx-[5px] h-px w-[100px] appearance-none bg-[#999] [&::-webkit-slider-thumb]:h-[11px] [&::-webkit-slider-thumb]:w-[5px] [&::-webkit-slider-thumb]:appearance-none [&::-webkit-slider-thumb]:bg-[#666]"
      />
      <button aria-label="放大" className="w-[9px] text-[14px] leading-5">+</button>
      <button className="w-[53px] pr-2 text-right text-[12px]">100%</button>
    </footer>
  );
}

/* Ring of solid shadows that gives the caption its round black outline. */
const OUTLINE = Array.from({ length: 64 }, (_, i) => {
  const a = (i / 64) * Math.PI * 2;
  return `${(Math.cos(a) * 8).toFixed(2)}px ${(Math.sin(a) * 8).toFixed(2)}px 0 #000`;
}).join(",");

function Caption() {
  return (
    <div
      className="pointer-events-none absolute inset-x-0 top-[299px] text-center font-['Noto_Sans','Noto_Sans_CJK_SC',sans-serif] text-[136px] leading-[242px] font-bold text-[#faf850]"
      style={{ textShadow: OUTLINE }}
    >
      <p>
        <span className="text-[142px] leading-none">Excel</span>表格快速移动
      </p>
      <p>行和列</p>
    </div>
  );
}

export default function App() {
  return (
    <div className="relative flex h-screen flex-col overflow-hidden bg-[#e6e6e6] font-['Noto_Sans','Noto_Sans_CJK_SC',sans-serif] text-[12px]">
      <div className="bg-[#1c6946]">
        <TitleBar />
        <Tabs />
      </div>
      <Ribbon />
      <div className="pt-2.5 pb-2.5">
        <FormulaBar />
      </div>
      <SheetArea />
      <SheetTabs />
      <StatusBar />
      <svg className="pointer-events-none absolute top-[467px] left-[692px]" width="12" height="18" viewBox="0 0 12 18" aria-hidden="true">
        <path d="M.5.5v14l3.200-3 2.300 5 2-1-2.200-4.700h4.500z" fill="#fff" stroke="#223" />
      </svg>
      <Caption />
    </div>
  );
}
